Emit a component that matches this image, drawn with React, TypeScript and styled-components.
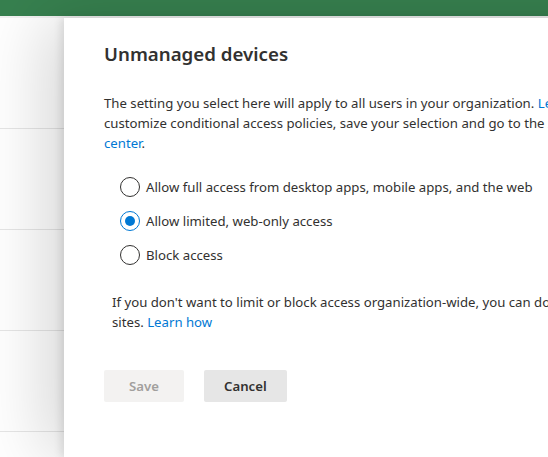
import React from 'react';
import styled, { createGlobalStyle } from 'styled-components';

const GlobalStyle = createGlobalStyle`
    html, body {
        margin: 0;
        padding: 0;
        background: #ffffff;
        overflow: hidden;
    }
    body {
        font-family: "Segoe UI", "Noto Sans", "Liberation Sans", sans-serif;
        color: #323130;
    }
`

const Page = styled.div`
    width: 548px;
    height: 457px;
    display: flex;
    flex-direction: column;
    overflow: hidden;
`

const SuiteBar = styled.div`
    height: 16px;
    flex: none;
    background: #37804f;
`

const Stage = styled.div`
    flex: 1;
    display: flex;
    border-top: 2px solid #f2f2f2;
    min-height: 0;
`

const Backdrop = styled.div`
    width: 64px;
    flex: none;
    display: flex;
    flex-direction: column;
    padding-top: 10px;
`

const BackdropRow = styled.div`
    height: 100px;
    flex: none;
    border-bottom: 1px solid #e6e6e6;
`

const Panel = styled.div`
    position: relative;
    z-index: 1;
    width: 640px;
    flex: none;
    background: #ffffff;
    box-shadow: -3px 0 8px rgba(0, 0, 0, 0.1), -20px 0 64px rgba(0, 0, 0, 0.16);
    padding: 22px 40px 0 40px;
    display: flex;
    flex-direction: column;
`

const Title = styled.h2`
    margin: 0;
    font-size: 18.7px;
    line-height: 28px;
    font-weight: 600;
    color: #323130;
`

const Paragraph = styled.p<{gap: number, indent?: number}>`
    margin: ${props => props.gap}px 0 0 ${props => props.indent ?? 0}px;
    font-size: 13.2px;
    line-height: 20px;
    white-space: nowrap;
    color: #323130;
`

const Link = styled.a`
    color: #0078d4;
    text-decoration: none;
`

const RadioGroup = styled.div`
    margin: 24px 0 0 16px;
    display: flex;
    flex-direction: column;
    gap: 14px;
`

const RadioRow = styled.label`
    display: flex;
    align-items: center;
    gap: 6px;
    height: 20px;
    font-size: 13.2px;
    line-height: 20px;
    color: #323130;
    white-space: nowrap;
`

const RadioCircle = styled.span<{checked: boolean}>`
    width: 20px;
    height: 20px;
    box-sizing: border-box;
    border-radius: 50%;
    border: 1px solid ${props => props.checked ? '#0078d4' : '#323130'};
    display: flex;
    align-items: center;
    justify-content: center;
    flex: none;

    &::after {
        content: '';
        width: 10px;
        height: 10px;
        border-radius: 50%;
        background: ${props => props.checked ? '#0078d4' : 'transparent'};
    }
`

const ButtonRow = styled.div`
    margin-top: 38px;
    display: flex;
    gap: 20px;
`

const Button = styled.button<{disabled?: boolean}>`
    height: 32px;
    padding: 0 20px;
    min-width: 80px;
    border: none;
    border-radius: 2px;
    font-family: inherit;
    font-size: 13.2px;
    font-weight: 600;
    background: ${props => props.disabled ? '#f3f2f1' : '#e6e6e6'};
    color: ${props => props.disabled ? '#a19f9d' : '#323130'};
`

const options = [
    'Allow full access from desktop apps, mobile apps, and the web',
    'Allow limited, web-only access',
    'Block access',
]

export default function App() {
    const selected = 1
    return (
        <Page>
            <GlobalStyle />
            <SuiteBar />
            <Stage>
                <Backdrop>
                    <BackdropRow />
                    <BackdropRow />
                    <BackdropRow />
                    <BackdropRow />
                </Backdrop>
                <Panel>
                    <Title>Unmanaged devices</Title>
                    <Paragraph gap={25}>
                        The setting you select here will apply to all users in your organization. <Link href="#">Learn more</Link>. To
                        <br />
                        customize conditional access policies, save your selection and go to the <Link href="#">Azure AD admin</Link>
                        <br />
                        <Link href="#">center</Link>.
                    </Paragraph>
                    <RadioGroup>
                        {options.map((label, i) => (
                            <RadioRow key={label}>
                                <RadioCircle checked={i === selected} />
                                {label}
                            </RadioRow>
                        ))}
                    </RadioGroup>
                    <Paragraph gap={27} indent={8}>
                        If you don't want to limit or block access organization-wide, you can do so for specific
                        <br />
                        sites. <Link href="#">Learn how</Link>
                    </Paragraph>
                    <ButtonRow>
                        <Button disabled>Save</Button>
                        <Button>Cancel</Button>
                    </ButtonRow>
                </Panel>
            </Stage>
        </Page>
    )
}
